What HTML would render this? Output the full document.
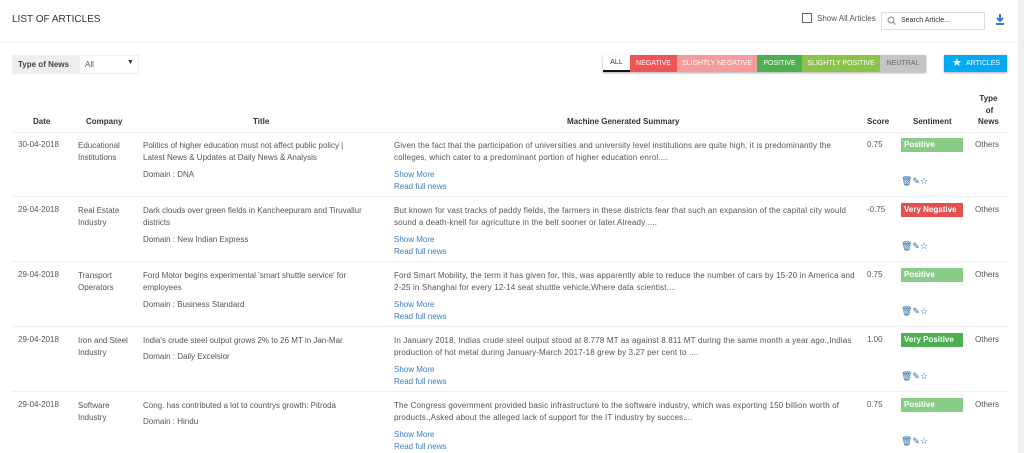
<!DOCTYPE html><html><head><style>
*{margin:0;padding:0;box-sizing:border-box}
body{width:1024px;height:453px;background:#fff;font-family:"Liberation Sans",sans-serif;font-size:8px;color:#555;position:relative;overflow:hidden}
.a{position:absolute;white-space:nowrap}
.h{font-weight:bold;color:#333}
.lnk{color:#3a7fc4}
.badge{position:absolute;left:901px;width:62px;height:14px;color:#fff;font-size:8px;padding:2px 3px;font-weight:bold}
.ln{position:absolute;height:1px;background:#eee}
.f div{display:flex;align-items:center;justify-content:center}
</style></head><body>
<div style="position:absolute;right:0;top:0;width:6px;height:453px;background:#f0f0f0"></div>
<div class="a" style="left:12px;top:14px;font-size:10px;color:#333">LIST OF ARTICLES</div>
<div style="position:absolute;left:0;top:42px;width:1018px;height:1px;background:#f3f3f3"></div>
<div style="position:absolute;left:802px;top:13px;width:10px;height:10px;border:1px solid #666"></div>
<div class="a" style="left:817px;top:14px;color:#555">Show All Articles</div>
<div style="position:absolute;left:881px;top:12px;width:104px;height:18px;border:1px solid #ddd"></div>
<svg class="a" style="left:887px;top:16px" width="9" height="9"><circle cx="4" cy="4" r="3" fill="none" stroke="#888"/><line x1="6" y1="6" x2="8.5" y2="8.5" stroke="#888"/></svg>
<div class="a" style="left:901px;top:17px;font-size:7px;color:#333">Search Article...</div>
<svg class="a" style="left:995px;top:14px" width="10" height="11"><path d="M5 0v6M2 4l3 3 3-3" stroke="#2a7fd4" stroke-width="2" fill="none"/><rect x="1" y="9" width="8" height="2" fill="#2a7fd4"/></svg>
<div style="position:absolute;left:12px;top:55px;width:127px;height:19px;border:1px solid #eee;background:#fff"></div>
<div style="position:absolute;left:12px;top:55px;width:68px;height:19px;background:#eee"></div>
<div class="a h" style="left:18px;top:60px;color:#444">Type of News</div>
<div class="a" style="left:85px;top:60px">All</div>
<div class="a" style="left:127px;top:59px;font-size:7px;color:#333">▼</div>
<div class="f" style="position:absolute;left:603px;top:55px;display:flex;height:17px;font-size:7px;color:#fff;box-shadow:0 1px 2px #aaa">
<div style="width:27px;background:#fff;color:#333;border-bottom:2px solid #111">ALL</div>
<div style="width:47px;background:#e55">NEGATIVE</div>
<div style="width:80px;background:#f59b9b">SLIGHTLY NEGATIVE</div>
<div style="width:45px;background:#4caf50">POSITIVE</div>
<div style="width:78px;background:#8bc34a">SLIGHTLY POSITIVE</div>
<div style="width:46px;background:#c4c4c4;color:#666">NEUTRAL</div></div>
<div class="a" style="left:944px;top:55px;width:63px;height:17px;background:#03a9f4;color:#fff;font-size:7px;padding:5px 0 0 22px;box-shadow:0 1px 2px #aaa">ARTICLES</div>
<div class="a" style="left:952px;top:56px;color:#fff;font-size:11px">★</div>
<div class="a h" style="left:33px;top:117px">Date</div>
<div class="a h" style="left:86px;top:117px">Company</div>
<div class="a h" style="left:253px;top:117px">Title</div>
<div class="a h" style="left:567px;top:117px">Machine Generated Summary</div>
<div class="a h" style="left:867px;top:117px">Score</div>
<div class="a h" style="left:913px;top:117px">Sentiment</div>
<div class="a h" style="left:978px;top:93px;text-align:center;line-height:11.5px">Type<br>&nbsp;of<br>News</div>
<div class="ln" style="left:12px;top:132px;width:996px"></div>

<div id="rows"></div>
<script>
var d=[["30-04-2018","Educational<br>Institutions","Politics of higher education must not affect public policy |<br>Latest News &amp; Updates at Daily News &amp; Analysis","DNA","Given the fact that the participation of universities and university level institutions are quite high, it is predominantly the<br>colleges, which cater to a predominant portion of higher education enrol....","0.75","Positive","#88cc88"],
["29-04-2018","Real Estate<br>Industry","Dark clouds over green fields in Kancheepuram and Tiruvallur<br>districts","New Indian Express","But known for vast tracks of paddy fields, the farmers in these districts fear that such an expansion of the capital city would<br>sound a death-knell for agriculture in the belt sooner or later.Already ....","-0.75","Very Negative","#e35050"],
["29-04-2018","Transport<br>Operators","Ford Motor begins experimental 'smart shuttle service' for<br>employees","Business Standard","Ford Smart Mobility, the term it has given for, this, was apparently able to reduce the number of cars by 15-20 in America and<br>2-25 in Shanghai for every 12-14 seat shuttle vehicle,Where data scientist....","0.75","Positive","#88cc88"],
["29-04-2018","Iron and Steel<br>Industry","India's crude steel output grows 2% to 26 MT in Jan-Mar","Daily Excelsior","In January 2018, Indias crude steel output stood at 8.778 MT as against 8.811 MT during the same month a year ago.,Indias<br>production of hot metal during January-March 2017-18 grew by 3.27 per cent to ....","1.00","Very Positive","#4caf50"],
["29-04-2018","Software<br>Industry","Cong. has contributed a lot to countrys growth: Pitroda","Hindu","The Congress government provided basic infrastructure to the software industry, which was exporting 150 billion worth of<br>products.,Asked about the alleged lack of support for the IT industry by succes....","0.75","Positive","#88cc88"]];
var h="";d.forEach(function(r,i){var t=132+i*65;var ol=r[2].indexOf("<br>")<0;
h+='<div class="a" style="left:18px;top:'+(t+8)+'px">'+r[0]+'</div>';
h+='<div class="a" style="left:78px;top:'+(t+8)+'px;line-height:11.5px">'+r[1]+'</div>';
h+='<div class="a" style="left:143px;top:'+(t+8)+'px;line-height:11.5px">'+r[2]+'</div>';
h+='<div class="a" style="left:143px;top:'+(t+(ol?25:38))+'px">Domain : '+r[3]+'</div>';
h+='<div class="a" style="left:394px;top:'+(t+8)+'px;line-height:11.5px;letter-spacing:0.15px">'+r[4]+'</div>';
h+='<div class="a lnk" style="left:394px;top:'+(t+37)+'px;line-height:11.5px">Show More<br>Read full news</div>';
h+='<div class="a" style="left:867px;top:'+(t+8)+'px">'+r[5]+'</div>';
h+='<div class="badge" style="top:'+(t+6)+'px;background:'+r[7]+'">'+r[6]+'</div>';
h+='<div class="a" style="left:901px;top:'+(t+44)+'px;color:#2b6aa8;font-size:9px">&#x1F5D1;&#xFE0E;✎☆</div>';
h+='<div class="a" style="left:975px;top:'+(t+8)+'px">Others</div>';
if(i<4)h+='<div class="ln" style="left:12px;top:'+(t+64)+'px;width:996px"></div>';});
document.getElementById("rows").innerHTML=h;
</script>
</body></html>
